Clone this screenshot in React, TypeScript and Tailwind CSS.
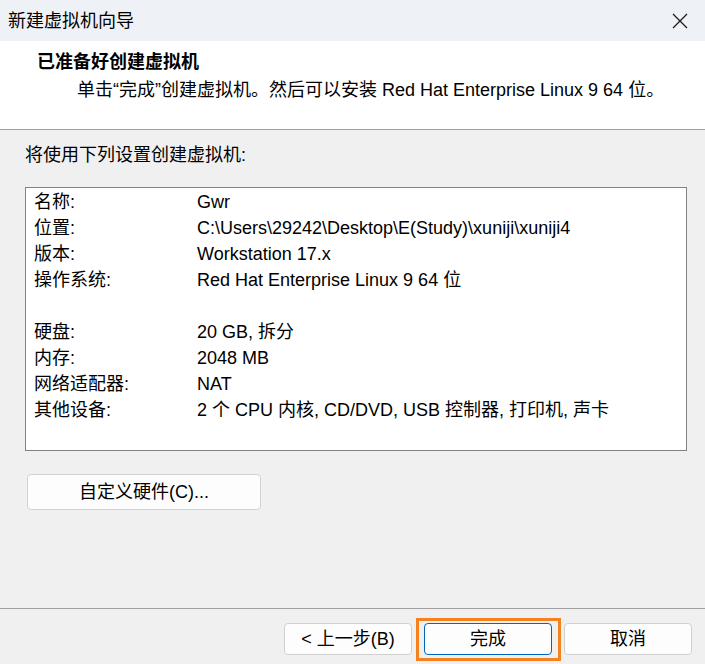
import React from 'react'

const rows: [string, string][] = [
  ['名称:', 'Gwr'],
  ['位置:', 'C:\\Users\\29242\\Desktop\\E(Study)\\xuniji\\xuniji4'],
  ['版本:', 'Workstation 17.x'],
  ['操作系统:', 'Red Hat Enterprise Linux 9 64 位'],
  ['', ''],
  ['硬盘:', '20 GB, 拆分'],
  ['内存:', '2048 MB'],
  ['网络适配器:', 'NAT'],
  ['其他设备:', '2 个 CPU 内核, CD/DVD, USB 控制器, 打印机, 声卡'],
]

export default function App() {
  return (
    <div
      className="w-[705px] h-[664px] flex flex-col bg-[#f0f0f0] text-black text-[18px] overflow-hidden"
      style={{ fontFamily: '"Liberation Sans", "Noto Sans CJK SC", sans-serif' }}
    >
      {/* title bar */}
      <div className="h-[41px] shrink-0 bg-[#eef1f6] flex items-center justify-between pl-[8px] pr-[17px]">
        <span className="leading-[24px]">新建虚拟机向导</span>
        <svg width="16" height="16" viewBox="0 0 16 16" className="text-[#1a1a1a]">
          <path d="M1 1 L15 15 M15 1 L1 15" stroke="currentColor" strokeWidth="1.3" fill="none" />
        </svg>
      </div>

      {/* header */}
      <div className="h-[89px] shrink-0 bg-white border-b border-[#a0a0a0] pt-[7px]">
        <div className="pl-[37px] leading-[28px] font-bold">已准备好创建虚拟机</div>
        <div className="pl-[77px] leading-[28px]">
          单击“完成”创建虚拟机。然后可以安装 Red Hat Enterprise Linux 9 64 位。
        </div>
      </div>

      {/* body */}
      <div className="flex-1 pt-[12px] pl-[25px]">
        <div className="leading-[26px]">将使用下列设置创建虚拟机:</div>
        <div className="mt-[19px] w-[662px] h-[264px] bg-white border border-[#838383] pt-[1px] pl-[8px]">
          {rows.map(([label, value], i) => (
            <div key={i} className="flex h-[26px] leading-[26px]">
              <span className="w-[163px] shrink-0">{label}</span>
              <span className="whitespace-nowrap">{value}</span>
            </div>
          ))}
        </div>
        <button className="mt-[23px] ml-[2px] w-[234px] h-[36px] bg-[#fdfdfd] border border-[#d0d0d0] rounded-[4px] leading-[34px]">
          自定义硬件(C)...
        </button>
      </div>

      {/* footer */}
      <div className="h-[56px] shrink-0 border-t border-[#a0a0a0] flex justify-end items-start pt-[14px] pr-[13px] gap-[12px]">
        <button className="w-[128px] h-[32px] bg-[#fdfdfd] border border-[#d0d0d0] rounded-[4px] leading-[30px]">
          &lt; 上一步(B)
        </button>
        <div className="relative">
          <span className="absolute -left-[8px] -right-[9px] -top-[5px] -bottom-[6px] border-[3px] border-[#f5821f]" />
          <button className="relative w-[128px] h-[32px] bg-[#fdfdfd] border border-[#0067c0] rounded-[4px] leading-[30px]">
            完成
          </button>
        </div>
        <button className="w-[128px] h-[32px] bg-[#fdfdfd] border border-[#d0d0d0] rounded-[4px] leading-[30px]">
          取消
        </button>
      </div>
    </div>
  )
}
